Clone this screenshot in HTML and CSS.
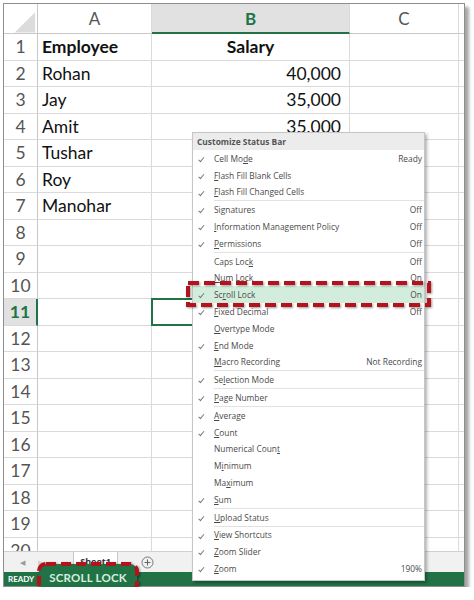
FILE: index.html
```html
<!DOCTYPE html>
<html>
<head>
  <link rel="stylesheet" href="styles.css">
</head>
<body>
  <div class="window">
    <div class="sheet">
      <div class="grid">
        <div class="corner">
          <svg width="34" height="30" viewBox="0 0 34 30"><polygon points="11,29 32,29 32,8" fill="#dcdcdc"/></svg>
        </div>
        <div class="colhead">A</div>
        <div class="colhead selected">B</div>
        <div class="colhead">C</div>
        <div class="colhead"></div>

        <div class="rowhead">1</div><div class="cell bold">Employee</div><div class="cell bold center">Salary</div><div class="cell"></div><div class="cell"></div>
        <div class="rowhead">2</div><div class="cell">Rohan</div><div class="cell num">40,000</div><div class="cell"></div><div class="cell"></div>
        <div class="rowhead">3</div><div class="cell">Jay</div><div class="cell num">35,000</div><div class="cell"></div><div class="cell"></div>
        <div class="rowhead">4</div><div class="cell">Amit</div><div class="cell num">35,000</div><div class="cell"></div><div class="cell"></div>
        <div class="rowhead">5</div><div class="cell">Tushar</div><div class="cell"></div><div class="cell"></div><div class="cell"></div>
        <div class="rowhead">6</div><div class="cell">Roy</div><div class="cell"></div><div class="cell"></div><div class="cell"></div>
        <div class="rowhead">7</div><div class="cell">Manohar</div><div class="cell"></div><div class="cell"></div><div class="cell"></div>
        <div class="rowhead">8</div><div class="cell"></div><div class="cell"></div><div class="cell"></div><div class="cell"></div>
        <div class="rowhead">9</div><div class="cell"></div><div class="cell"></div><div class="cell"></div><div class="cell"></div>
        <div class="rowhead">10</div><div class="cell"></div><div class="cell"></div><div class="cell"></div><div class="cell"></div>
        <div class="rowhead selected">11</div><div class="cell"></div><div class="cell active"></div><div class="cell"></div><div class="cell"></div>
        <div class="rowhead">12</div><div class="cell"></div><div class="cell"></div><div class="cell"></div><div class="cell"></div>
        <div class="rowhead">13</div><div class="cell"></div><div class="cell"></div><div class="cell"></div><div class="cell"></div>
        <div class="rowhead">14</div><div class="cell"></div><div class="cell"></div><div class="cell"></div><div class="cell"></div>
        <div class="rowhead">15</div><div class="cell"></div><div class="cell"></div><div class="cell"></div><div class="cell"></div>
        <div class="rowhead">16</div><div class="cell"></div><div class="cell"></div><div class="cell"></div><div class="cell"></div>
        <div class="rowhead">17</div><div class="cell"></div><div class="cell"></div><div class="cell"></div><div class="cell"></div>
        <div class="rowhead">18</div><div class="cell"></div><div class="cell"></div><div class="cell"></div><div class="cell"></div>
        <div class="rowhead">19</div><div class="cell"></div><div class="cell"></div><div class="cell"></div><div class="cell"></div>
        <div class="rowhead">20</div><div class="cell"></div><div class="cell"></div><div class="cell"></div><div class="cell"></div>
      </div>
    </div>

    <div class="tabs">
      <span class="tab-arrow">&#9664;</span>
      <span class="tab-arrow faded">&#9654;</span>
      <div class="sheet-tab">Sheet1</div>
      <svg class="add-sheet" width="13" height="13" viewBox="0 0 13 13">
        <circle cx="6.5" cy="6.5" r="5.5" fill="none" stroke="#777" stroke-width="1"/>
        <path d="M6.5 3.5 V9.5 M3.5 6.5 H9.5" stroke="#666" stroke-width="1.1"/>
      </svg>
    </div>

    <div class="status">READY</div>

    <div class="menu">
      <div class="menu-title">Customize Status Bar</div>
      <div class="item on"><span class="label">Cell Mo<u>d</u>e</span><span class="value">Ready</span></div>
      <div class="item on"><span class="label"><u>F</u>lash Fill Blank Cells</span></div>
      <div class="item on"><span class="label"><u>F</u>lash Fill Changed Cells</span></div>
      <div class="sep"></div>
      <div class="item on"><span class="label">Signatures</span><span class="value">Off</span></div>
      <div class="item on"><span class="label"><u>I</u>nformation Management Policy</span><span class="value">Off</span></div>
      <div class="item on"><span class="label"><u>P</u>ermissions</span><span class="value">Off</span></div>
      <div class="sep"></div>
      <div class="item"><span class="label">Caps Loc<u>k</u></span><span class="value">Off</span></div>
      <div class="item"><span class="label"><u>N</u>um Lock</span><span class="value">On</span></div>
      <div class="item on highlight">
        <span class="label">Sc<u>r</u>oll Lock</span><span class="value">On</span>
        <svg class="dash-box" width="245" height="26" viewBox="0 0 245 26">
          <rect x="2" y="2" width="241" height="22" fill="none" stroke="#b3141c" stroke-width="4" stroke-dasharray="11 5"/>
        </svg>
      </div>
      <div class="item on"><span class="label"><u>F</u>ixed Decimal</span><span class="value">Off</span></div>
      <div class="item"><span class="label"><u>O</u>vertype Mode</span></div>
      <div class="item on"><span class="label"><u>E</u>nd Mode</span></div>
      <div class="item"><span class="label"><u>M</u>acro Recording</span><span class="value">Not Recording</span></div>
      <div class="sep"></div>
      <div class="item on"><span class="label">Se<u>l</u>ection Mode</span></div>
      <div class="sep"></div>
      <div class="item on"><span class="label"><u>P</u>age Number</span></div>
      <div class="sep"></div>
      <div class="item on"><span class="label"><u>A</u>verage</span></div>
      <div class="item on"><span class="label"><u>C</u>ount</span></div>
      <div class="item"><span class="label">Numerical Coun<u>t</u></span></div>
      <div class="item"><span class="label">M<u>i</u>nimum</span></div>
      <div class="item"><span class="label">Ma<u>x</u>imum</span></div>
      <div class="item on"><span class="label"><u>S</u>um</span></div>
      <div class="sep"></div>
      <div class="item on"><span class="label"><u>U</u>pload Status</span></div>
      <div class="sep"></div>
      <div class="item on"><span class="label"><u>V</u>iew Shortcuts</span></div>
      <div class="item on"><span class="label"><u>Z</u>oom Slider</span></div>
      <div class="item on"><span class="label"><u>Z</u>oom</span><span class="value">190%</span></div>
    </div>

    <div class="callout">
      <svg class="dash-box" width="102" height="30" viewBox="0 0 102 30">
        <rect x="2" y="2" width="98" height="26" rx="7" fill="#217346" stroke="#b3141c" stroke-width="4" stroke-dasharray="10 5"/>
      </svg>
      <span class="callout-text">SCROLL LOCK</span>
    </div>
  </div>
</body>
</html>
```

FILE: styles.css
```css
:root {
  --excel-green: #217346;
  --grid: #dadada;
  --head-line: #c8c8c8;
  --menu-text: #4a4a4a;
}

body {
  margin: 0;
  background: #ffffff;
  font-family: Lato, "Open Sans", sans-serif;
}

.window {
  position: relative;
  box-sizing: border-box;
  width: 462px;
  height: 584px;
  margin: 3px 0 0 3px;
  border: 1px solid #8e8e8e;
  background: #ffffff;
  display: flex;
  flex-direction: column;
  box-shadow: 4px 4px 3px rgba(0, 0, 0, 0.35);
}

/* sheet grid */

.sheet {
  flex: 1;
  overflow: hidden;
}

.grid {
  display: grid;
  grid-template-columns: 34px 114px 198px 109px 1fr;
  grid-template-rows: 30px;
  grid-auto-rows: 26.5px;
}

.grid > div {
  box-sizing: border-box;
  border-right: 1px solid var(--grid);
  border-bottom: 1px solid var(--grid);
  display: flex;
  align-items: center;
  font-size: 17.5px;
  color: #111;
  white-space: nowrap;
}

.corner {
  border-right-color: var(--head-line) !important;
  border-bottom-color: var(--head-line) !important;
}

.corner svg {
  display: block;
}

.colhead {
  justify-content: center;
  color: #555 !important;
  font-size: 17px !important;
  border-bottom-color: var(--head-line) !important;
}

.colhead.selected {
  background: #e1e1e1;
  color: var(--excel-green) !important;
  font-weight: 700;
  border-bottom: 2px solid var(--excel-green) !important;
}

.rowhead {
  justify-content: center;
  color: #555 !important;
  border-right-color: var(--head-line) !important;
}

.rowhead.selected {
  background: #e1e1e1;
  color: var(--excel-green) !important;
  font-weight: 700;
  border-right: 2px solid var(--excel-green) !important;
}

.cell {
  padding: 0 4px;
}

.cell.bold {
  font-weight: 700;
}

.cell.center {
  justify-content: center;
}

.cell.num {
  justify-content: flex-end;
  padding-right: 8px;
}

.cell.active {
  border: 2px solid var(--excel-green) !important;
  margin: -1px 0 0 -1px;
}

/* sheet tabs and status bar */

.tabs {
  height: 21px;
  box-sizing: border-box;
  border-top: 1px solid #d0d0d0;
  background: #f1f1f1;
  display: flex;
  align-items: center;
  padding-left: 16px;
  font-family: "Open Sans", sans-serif;
}

.tab-arrow {
  font-size: 7px;
  color: #999;
  width: 18px;
}

.tab-arrow.faded {
  color: #d0d0d0;
}

.sheet-tab {
  align-self: stretch;
  width: 45px;
  margin-left: 17px;
  background: #ffffff;
  border-left: 1px solid #c8c8c8;
  border-right: 1px solid #c8c8c8;
  font-size: 9px;
  font-weight: 700;
  color: #333;
  text-align: center;
  padding-top: 3px;
  box-sizing: border-box;
}

.add-sheet {
  margin-left: 23px;
}

.status {
  height: 14px;
  background: var(--excel-green);
  color: #ffffff;
  font-size: 8px;
  font-weight: 700;
  line-height: 14px;
  padding-left: 4px;
}

/* status bar menu */

.menu {
  position: absolute;
  left: 188px;
  top: 128px;
  width: 233px;
  box-sizing: border-box;
  background: #ffffff;
  border: 1px solid #c6c6c6;
  box-shadow: 2px 2px 3px rgba(0, 0, 0, 0.3);
  padding-bottom: 3px;
  font-family: "Open Sans", sans-serif;
  font-size: 8.4px;
  color: var(--menu-text);
}

.menu-title {
  height: 17px;
  line-height: 17px;
  background: #ececec;
  font-weight: 700;
  padding-left: 4px;
  color: #555;
}

.item {
  position: relative;
  height: 16.8px;
  display: flex;
  align-items: center;
  padding: 0 2px 0 21px;
}

.item.on::before {
  content: "";
  position: absolute;
  left: 7px;
  top: 6px;
  width: 2px;
  height: 4.5px;
  border-right: 1px solid #777;
  border-bottom: 1px solid #777;
  transform: rotate(40deg);
}

.label {
  flex: 1;
}

.label u {
  text-underline-offset: 1px;
}

.sep {
  height: 1px;
  margin-left: 21px;
  background: #e2e2e2;
}

.item.highlight {
  background: #d3eddd;
}

.item.highlight .dash-box {
  position: absolute;
  left: -7px;
  top: -5px;
  filter: drop-shadow(1px 1px 1px rgba(0, 0, 0, 0.4));
}

/* scroll lock callout */

.callout {
  position: absolute;
  left: 33px;
  top: 558px;
  width: 102px;
  height: 30px;
  display: flex;
  align-items: center;
  justify-content: center;
}

.callout .dash-box {
  position: absolute;
  left: 0;
  top: 0;
  filter: drop-shadow(1px 1px 1px rgba(0, 0, 0, 0.45));
}

.callout-text {
  position: relative;
  color: #d6eedd;
  font-size: 11.5px;
  font-weight: 700;
  letter-spacing: 0.2px;
}
```
